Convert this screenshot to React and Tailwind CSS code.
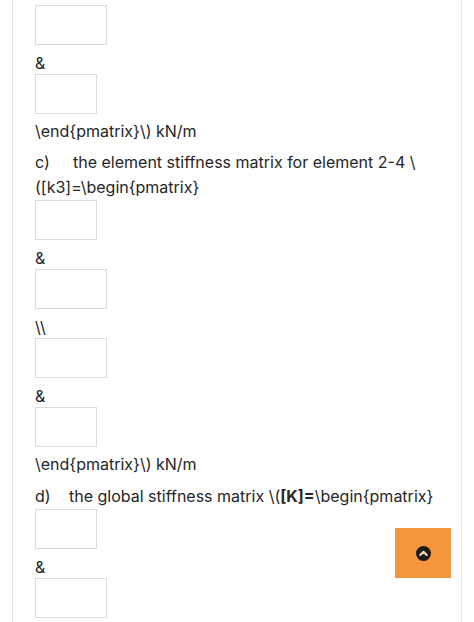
import React from 'react'

const font = { fontFamily: 'Inter, "Liberation Sans", Arial, sans-serif' }

function Box({ wide }) {
  return <div className={`h-10 ${wide ? 'w-[72px]' : 'w-[62px]'} border-[1.5px] border-[#dcdcdc] bg-white`} />
}

function Amp({ children = '&' }) {
  return <div className="mt-[8px] mb-[1px] leading-[20px]">{children}</div>
}

function End() {
  return <div className="mt-[7px] leading-[20px]">\end{'{pmatrix}'}\) kN/m</div>
}

export default function App() {
  return (
    <div className="min-h-screen bg-white text-[16px] text-[#262626]" style={font}>
      <div className="mx-[12px] w-[450px] min-h-[622px] border-x border-[#e6e6e6] pl-[22px] pt-[5px] pb-[5px]">
        <Box wide />
        <Amp />
        <Box />
        <End />
        <div className="mt-[9px] leading-[25px]">
          <span className="inline-block w-[38px]">c)</span>the element stiffness matrix for element 2-4 \
          <br />([k3]=\begin{'{pmatrix}'}
        </div>
        <Box />
        <Amp />
        <Box wide />
        <Amp>\\</Amp>
        <Box wide />
        <Amp />
        <Box />
        <End />
        <div className="mt-[10px] leading-[25px]">
          <span className="inline-block w-[34px]">d)</span>the global stiffness matrix \(<b>[K]=</b>\begin{'{pmatrix}'}
        </div>
        <Box />
        <Amp />
        <Box wide />
      </div>
      <button className="fixed right-[23px] bottom-[44px] flex h-[50px] w-[56px] items-center justify-center bg-[#f6963c]">
        <svg width="15" height="15" viewBox="0 0 16 16">
          <circle cx="8" cy="8" r="8" fill="#1c1c1c" />
          <path d="M4.6 9.6 8 6.2l3.4 3.4" fill="none" stroke="#fbd9b6" strokeWidth="2.2" strokeLinecap="round" strokeLinejoin="round" />
        </svg>
      </button>
    </div>
  )
}
